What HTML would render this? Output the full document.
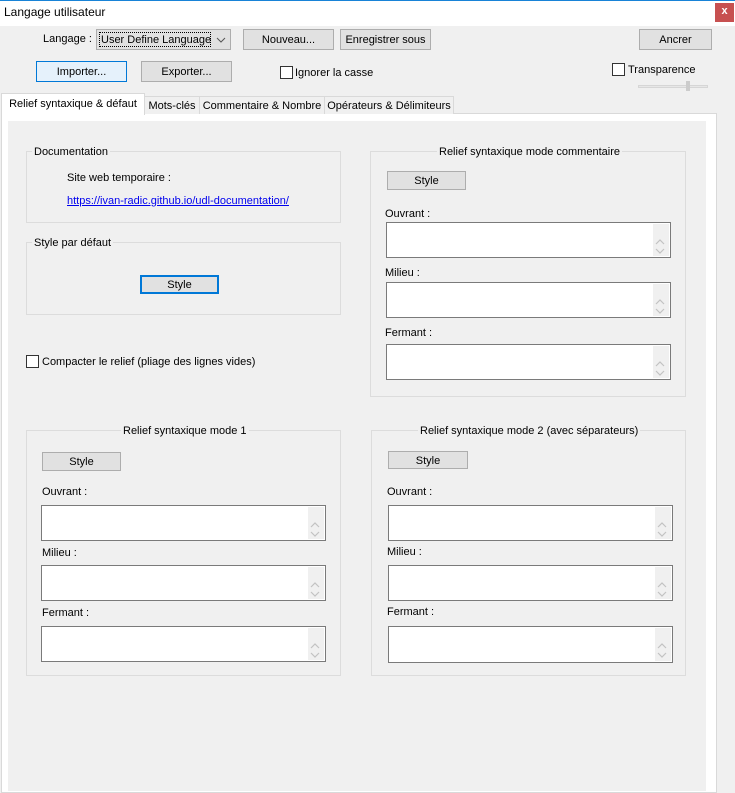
<!DOCTYPE html>
<html><head><meta charset="utf-8"><style>
*{box-sizing:border-box;margin:0;padding:0}
body{width:735px;height:790px;overflow:hidden;background:#f0f0f0;font-family:"Liberation Sans",sans-serif;font-size:11px;color:#000;position:relative}
.a{position:absolute}
.t{position:absolute;white-space:nowrap;line-height:17px}
.btn{position:absolute;background:#e1e1e1;border:1px solid #adadad;text-align:center;white-space:nowrap;padding-top:2px}
.cb{position:absolute;width:13px;height:13px;border:1px solid #333;background:#fff}
.grp{position:absolute;border:1px solid #dcdcdc}
.lg{position:absolute;background:#f0f0f0;padding:0 2px;line-height:16px;white-space:nowrap}
.tb{position:absolute;background:#fff;border:1px solid #7a7a7a}
.tb .sb{position:absolute;right:1px;top:1px;bottom:1px;width:16px;background:#f0f0f0}
.tab{position:absolute;border:1px solid #d9d9d9;border-bottom:none;background:#f0f0f0;text-align:center;line-height:18px;white-space:nowrap}
</style></head><body>
<div class="a" style="left:0;top:0;width:735px;height:26px;background:#fff;border-top:1px solid #1883d7"></div>
<div class="t" style="left:4px;top:4px;font-size:12px">Langage utilisateur</div>
<div class="a" style="left:715px;top:3px;width:19px;height:19px;background:#c75050;color:#fff;text-align:center;font-weight:bold;line-height:17px;font-size:11px">x</div>

<div class="t" style="left:43px;top:31px">Langage :</div>
<div class="btn" style="left:96px;top:29px;width:135px;height:21px;text-align:left;padding-top:0">
 <div class="a" style="left:2px;top:2px;width:112px;height:15px;border:1px dotted #000;padding-left:1px;line-height:14px">User Define Language</div>
 <svg class="a" style="left:119px;top:7px" width="10" height="6"><path d="M1 1L5 5L9 1" fill="none" stroke="#555"/></svg>
</div>
<div class="btn" style="left:243px;top:29px;width:91px;height:21px;line-height:17px">Nouveau...</div>
<div class="btn" style="left:340px;top:29px;width:91px;height:21px;line-height:17px">Enregistrer sous</div>
<div class="btn" style="left:639px;top:29px;width:73px;height:21px;line-height:17px">Ancrer</div>
<div class="btn" style="left:36px;top:61px;width:91px;height:21px;line-height:17px;background:#e5f1fb;border-color:#0078d7">Importer...</div>
<div class="btn" style="left:141px;top:61px;width:91px;height:21px;line-height:17px">Exporter...</div>
<div class="cb" style="left:280px;top:66px"></div>
<div class="t" style="left:295px;top:65px">Ignorer la casse</div>
<div class="cb" style="left:612px;top:63px"></div>
<div class="t" style="left:628px;top:62px">Transparence</div>
<div class="a" style="left:638px;top:85px;width:70px;height:3px;background:#e7e7e7;border:1px solid #d6d6d6"></div>
<div class="a" style="left:686px;top:81px;width:4px;height:10px;background:#ccc"></div>

<div class="a" style="left:1px;top:113px;width:716px;height:680px;border:1px solid #d9d9d9;background:#fff"></div>
<div class="a" style="left:8px;top:121px;width:698px;height:670px;background:#f0f0f0"></div>
<div class="tab" style="left:144px;top:96px;width:56px;height:18px">Mots-clés</div>
<div class="tab" style="left:199px;top:96px;width:126px;height:18px">Commentaire &amp; Nombre</div>
<div class="tab" style="left:324px;top:96px;width:130px;height:18px">Opérateurs &amp; Délimiteurs</div>
<div class="tab" style="left:1px;top:93px;width:144px;height:22px;background:#fff;line-height:20px">Relief syntaxique &amp; défaut</div>

<div class="grp" style="left:26px;top:151px;width:315px;height:72px"></div>
<div class="lg" style="left:32px;top:144px">Documentation</div>
<div class="t" style="left:67px;top:170px">Site web temporaire :</div>
<div class="t" style="left:67px;top:193px;color:#0000ee;text-decoration:underline">https://ivan-radic.github.io/udl-documentation/</div>
<div class="grp" style="left:26px;top:242px;width:315px;height:73px"></div>
<div class="lg" style="left:32px;top:235px">Style par défaut</div>
<div class="btn" style="left:140px;top:275px;width:79px;height:19px;border:2px solid #0078d7;line-height:14px;padding-top:1px">Style</div>
<div class="cb" style="left:26px;top:355px"></div>
<div class="t" style="left:42px;top:354px">Compacter le relief (pliage des lignes vides)</div>

<div class="grp" style="left:370px;top:151px;width:316px;height:246px"></div>
<div class="lg" style="left:437px;top:144px">Relief syntaxique mode commentaire</div>
<div class="btn" style="left:387px;top:171px;width:79px;height:19px;line-height:15px">Style</div>
<div class="t" style="left:385px;top:206px">Ouvrant :</div>
<div class="tb" style="left:386px;top:222px;width:285px;height:36px"><div class="sb"></div></div>
<div class="t" style="left:385px;top:265px">Milieu :</div>
<div class="tb" style="left:386px;top:282px;width:285px;height:36px"><div class="sb"></div></div>
<div class="t" style="left:385px;top:325px">Fermant :</div>
<div class="tb" style="left:386px;top:344px;width:285px;height:36px"><div class="sb"></div></div>

<div class="grp" style="left:26px;top:430px;width:315px;height:246px"></div>
<div class="lg" style="left:121px;top:423px">Relief syntaxique mode 1</div>
<div class="btn" style="left:42px;top:452px;width:79px;height:19px;line-height:15px">Style</div>
<div class="t" style="left:42px;top:484px">Ouvrant :</div>
<div class="tb" style="left:41px;top:505px;width:285px;height:36px"><div class="sb"></div></div>
<div class="t" style="left:42px;top:545px">Milieu :</div>
<div class="tb" style="left:41px;top:565px;width:285px;height:36px"><div class="sb"></div></div>
<div class="t" style="left:42px;top:605px">Fermant :</div>
<div class="tb" style="left:41px;top:626px;width:285px;height:36px"><div class="sb"></div></div>

<div class="grp" style="left:371px;top:430px;width:315px;height:246px"></div>
<div class="lg" style="left:418px;top:423px">Relief syntaxique mode 2 (avec séparateurs)</div>
<div class="btn" style="left:388px;top:451px;width:80px;height:18px;line-height:14px">Style</div>
<div class="t" style="left:387px;top:484px">Ouvrant :</div>
<div class="tb" style="left:388px;top:505px;width:285px;height:36px"><div class="sb"></div></div>
<div class="t" style="left:387px;top:544px">Milieu :</div>
<div class="tb" style="left:388px;top:565px;width:285px;height:36px"><div class="sb"></div></div>
<div class="t" style="left:387px;top:604px">Fermant :</div>
<div class="tb" style="left:388px;top:626px;width:285px;height:37px"><div class="sb"></div></div>

<svg class="a" style="left:0;top:0" width="735" height="790">
<g fill="none" stroke="#c2c2c2" stroke-width="1.2">
<path d="M656 244l4-4l4 4M656 249l4 4l4-4"/>
<path d="M656 304l4-4l4 4M656 309l4 4l4-4"/>
<path d="M656 366l4-4l4 4M656 371l4 4l4-4"/>
<path d="M311 527l4-4l4 4M311 532l4 4l4-4"/>
<path d="M311 587l4-4l4 4M311 592l4 4l4-4"/>
<path d="M311 648l4-4l4 4M311 653l4 4l4-4"/>
<path d="M658 527l4-4l4 4M658 532l4 4l4-4"/>
<path d="M658 587l4-4l4 4M658 592l4 4l4-4"/>
<path d="M658 648l4-4l4 4M658 653l4 4l4-4"/>
</g></svg>
</body></html>
